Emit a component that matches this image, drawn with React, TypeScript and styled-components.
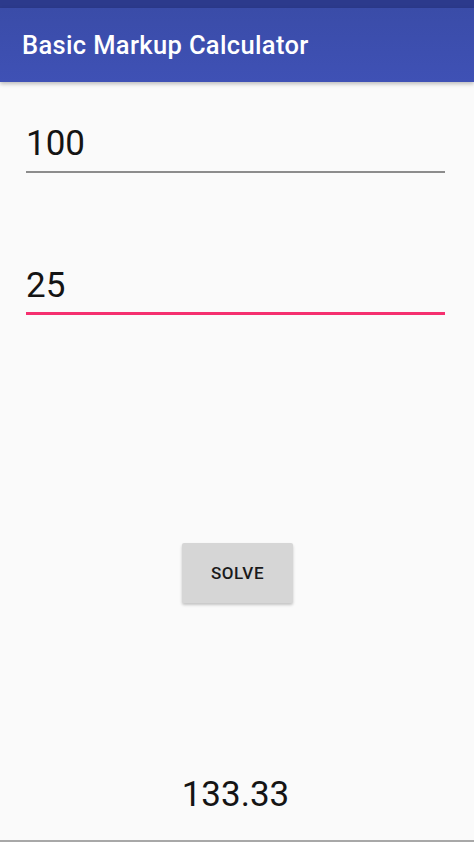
import * as React from 'react';
import styled, { createGlobalStyle } from 'styled-components';

const GlobalStyle = createGlobalStyle`
    html, body {
        margin: 0;
        padding: 0;
        background: #fafafa;
    }
    body {
        font-family: Roboto, "Noto Sans", "Liberation Sans", sans-serif;
    }
`;

const Screen = styled.div`
    display: flex;
    flex-direction: column;
    width: 474px;
    height: 842px;
    background: #fafafa;
    overflow: hidden;
`;

const StatusBar = styled.div`
    height: 8px;
    background: #2c3a8c;
`;

const Toolbar = styled.header`
    display: flex;
    align-items: center;
    height: 74px;
    padding: 0 22px;
    background: linear-gradient(180deg, #3a4ca8 0%, #3f51b5 100%);
    box-shadow: 0 2px 4px rgba(0, 0, 0, 0.25);
    z-index: 1;
`;

const Title = styled.h1`
    margin: 0;
    color: #ffffff;
    font-size: 25.5px;
    font-weight: 500;
    letter-spacing: 0.35px;
`;

const Content = styled.main`
    flex: 1;
    display: flex;
    flex-direction: column;
    padding: 0 29px 0 26px;
`;

const Field = styled.div<{ $focused?: boolean; $top: number }>`
    margin-top: ${p => p.$top}px;
    font-size: 35px;
    line-height: 42px;
    color: #141414;
    padding-bottom: ${p => (p.$focused ? 5 : 6)}px;
    border-bottom: ${p => (p.$focused ? '3px solid #f5306f' : '2px solid #8c8c8c')};
`;

const ButtonRow = styled.div`
    display: flex;
    justify-content: center;
    margin-top: 228px;
    padding-left: 4px;
`;

const SolveButton = styled.button`
    width: 111px;
    height: 60px;
    border: none;
    border-radius: 2px;
    background: #d6d6d6;
    box-shadow: 0 2px 3px rgba(0, 0, 0, 0.22);
    color: #1a1a1a;
    font-family: Roboto, "Liberation Sans", sans-serif;
    font-size: 17px;
    font-weight: 500;
    letter-spacing: 0.6px;
`;

const Result = styled.div`
    margin-top: 171px;
    text-align: center;
    font-size: 35px;
    line-height: 42px;
    color: #141414;
`;

const NavEdge = styled.div`
    height: 2px;
    background: #a8a8a8;
`;

export default function App() {
    return (
        <Screen>
            <GlobalStyle />
            <StatusBar />
            <Toolbar>
                <Title>Basic Markup Calculator</Title>
            </Toolbar>
            <Content>
                <Field $top={41}>100</Field>
                <Field $top={92} $focused>
                    25
                </Field>
                <ButtonRow>
                    <SolveButton>SOLVE</SolveButton>
                </ButtonRow>
                <Result>133.33</Result>
            </Content>
            <NavEdge />
        </Screen>
    );
}
